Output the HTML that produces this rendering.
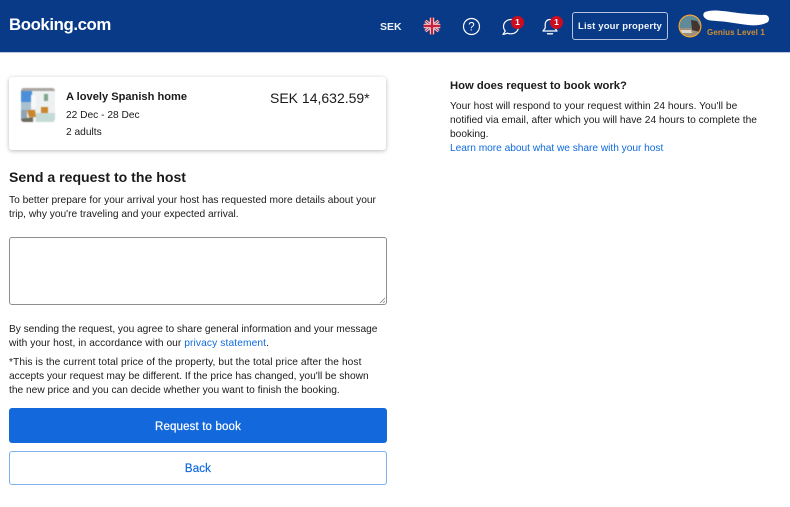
<!DOCTYPE html>
<html><head><meta charset="utf-8">
<style>
html,body{margin:0;padding:0;background:#fff}
body{width:790px;height:507px;position:relative;overflow:hidden;font-family:"Liberation Sans",sans-serif;color:#1a1a1a;-webkit-font-smoothing:antialiased}
.t{position:absolute;white-space:nowrap;font-size:10.2px;line-height:14px;letter-spacing:0}
.b{font-weight:700}
a{color:#0f6adf;text-decoration:none}
</style></head><body>
<div style="position:absolute;left:0;top:0;width:790px;height:53px;background:#083a87;border-bottom:1px solid #b9c6dc;box-sizing:border-box"></div>
<div class="t b" style="left:9px;top:13px;font-size:16.8px;line-height:24px;color:#fff;letter-spacing:-.4px">Booking.com</div>
<div class="t b" style="left:380px;top:20px;font-size:10.500px;color:#f0f4fa">SEK</div>

<svg style="position:absolute;left:423px;top:17px" width="18" height="18" viewBox="0 0 18 18">
<defs><clipPath id="c"><circle cx="9" cy="9" r="8.500"/></clipPath></defs>
<g clip-path="url(#c)"><rect width="18" height="18" fill="#1f2f6e"/>
<path d="M0 2L18 16M18 2L0 16" stroke="#f0dfe4" stroke-width="3"/>
<path d="M0 2L18 16M18 2L0 16" stroke="#c8233c" stroke-width="1"/>
<path d="M9 0V18M0 9H18" stroke="#f3e6ea" stroke-width="4.400"/>
<path d="M9 0V18M0 9H18" stroke="#c8233c" stroke-width="2.400"/></g></svg>

<svg style="position:absolute;left:462px;top:17px" width="19" height="19" viewBox="0 0 19 19"><circle cx="9.500" cy="9.500" r="8" fill="none" stroke="#fff" stroke-width="1.200"/><text x="9.500" y="13.500" text-anchor="middle" font-size="11.500" fill="#fff" font-family="Liberation Sans">?</text></svg>

<svg style="position:absolute;left:501px;top:17px" width="20" height="20" viewBox="0 0 20 20"><path d="M10 2.500C5.500 2.500 2.500 5.700 2.500 9.500c0 1.800.7 3.300 1.800 4.500L2 17.500l4.600-1.300c1 .4 2.200.6 3.400.6 4.500 0 7.500-3.200 7.500-7.200S14.500 2.500 10 2.500z" fill="none" stroke="#fff" stroke-width="1.200" stroke-linejoin="round"/></svg>
<div class="t b" style="left:511px;top:16px;width:13px;height:13px;border-radius:50%;background:#cc0d20;color:#fff;font-size:8.500px;line-height:13px;text-align:center">1</div>

<svg style="position:absolute;left:541px;top:17px" width="18" height="20" viewBox="0 0 18 20"><path d="M9 2.500c-3 0-4.800 2.200-4.800 5v3.500L2 14h14l-2.200-3V7.500c0-2.800-1.800-5-4.800-5z" fill="none" stroke="#fff" stroke-width="1.200" stroke-linejoin="round"/><path d="M6.500 16.800h5" stroke="#fff" stroke-width="1.300" stroke-linecap="round"/></svg>
<div class="t b" style="left:550px;top:16px;width:13px;height:13px;border-radius:50%;background:#cc0d20;color:#fff;font-size:8.500px;line-height:13px;text-align:center">1</div>

<div class="t b" style="left:572px;top:12px;width:96px;height:28px;box-sizing:border-box;border:1px solid #b5c4de;border-radius:3px;color:#f0f4fa;font-size:9.500px;line-height:27px;text-align:center;letter-spacing:.15px">List your property</div>

<svg style="position:absolute;left:678px;top:14px;" width="24" height="24" viewBox="0 0 24 24"><defs><clipPath id="a"><circle cx="12" cy="12" r="10.500"/></clipPath></defs><g clip-path="url(#a)"><rect width="24" height="24" fill="#5f8a99"/><rect y="14" width="24" height="10" fill="#9c8f7c"/><path d="M13 6l6 1 4 7-1 4-8-2z" fill="#43342f"/><path d="M2 16h11l1 3H4z" fill="#d8d6cc"/></g><circle cx="12" cy="12" r="10.900" fill="none" stroke="#f2a530" stroke-width="1.200"/></svg>
<svg style="position:absolute;left:702px;top:9px" width="68" height="20" viewBox="0 0 68 20"><path d="M3 3C10 0 22 2 36 4c10 1 20 2 28 2 4 1 4 7 0 8-4 2-10 3-18 2-8-1-14-2-21-3C18 12 10 12 6 11 1 9 0 5 3 3z" fill="#fff"/></svg>
<div class="t b" style="left:707px;top:26px;font-size:8px;color:#cf9030;letter-spacing:.1px">Genius Level 1</div>

<div style="position:absolute;left:9px;top:77px;width:377px;height:73px;background:#fff;border-radius:3px;box-shadow:0 1px 4px rgba(0,0,0,.28)"></div>
<svg style="position:absolute;left:21px;top:88px;border-radius:3px;filter:blur(.4px)" width="34" height="34" viewBox="0 0 34 34"><rect width="34" height="34" fill="#eef1f1"/><rect width="34" height="3" fill="#a9a5a0"/><rect y="3" width="11" height="11" fill="#4a8fd8"/><rect x="10" y="7" width="5" height="13" fill="#f7f8f8"/><rect x="23" y="6" width="4" height="7" fill="#7fa58c"/><rect y="14" width="10" height="8" fill="#a9c0d0"/><rect y="22" width="6" height="12" fill="#8fa3b2"/><path d="M6 22h8l1 7H8z" fill="#c9862e"/><path d="M20 19h7v6h-7z" fill="#c9862e"/><rect x="15" y="25" width="19" height="9" fill="#c5dbd8"/><path d="M0 31l12-2v5H0z" fill="#6f6a5c"/></svg>
<div class="t b" style="left:66px;top:90px;font-size:11.100px">A lovely Spanish home</div>
<div class="t" style="left:66px;top:109px">22 Dec - 28 Dec</div>
<div class="t" style="left:66px;top:126px">2 adults</div>
<div class="t" style="left:270px;top:89px;font-size:14px;line-height:18px">SEK 14,632.59*</div>

<div class="t b" style="left:9px;top:168px;font-size:14.100px;line-height:19px">Send a request to the host</div>
<div class="t" style="left:9px;top:194px">To better prepare for your arrival your host has requested more details about your</div>
<div class="t" style="left:9px;top:208px">trip, why you're traveling and your expected arrival.</div>

<div style="position:absolute;left:9px;top:237px;width:378px;height:68px;box-sizing:border-box;border:1px solid #8e8e8e;border-radius:3px"></div>
<svg style="position:absolute;left:379px;top:297px" width="7" height="7" viewBox="0 0 7 7"><path d="M1 6L6 1M4 6L6 4" stroke="#888" stroke-width=".8"/></svg>

<div class="t" style="left:9px;top:323px;letter-spacing:-.04px">By sending the request, you agree to share general information and your message</div>
<div class="t" style="left:9px;top:337px;letter-spacing:.05px">with your host, in accordance with our <a style="letter-spacing:.12px">privacy statement</a>.</div>
<div class="t" style="left:9px;top:356px;letter-spacing:.08px">*This is the current total price of the property, but the total price after the host</div>
<div class="t" style="left:9px;top:370px">accepts your request may be different. If the price has changed, you'll be shown</div>
<div class="t" style="left:9px;top:384px">the new price and you can decide whether you want to finish the booking.</div>

<div class="t" style="left:9px;top:408px;width:378px;height:35px;background:#1368dc;border-radius:3px;color:#fff;font-size:11.500px;line-height:39px;letter-spacing:.15px;text-align:center;-webkit-text-stroke:.2px #fff">Request to book</div>
<div class="t" style="left:9px;top:451px;width:378px;height:34px;box-sizing:border-box;border:1px solid #7db0ee;border-radius:3px;color:#0f6adf;font-size:11.500px;line-height:34px;letter-spacing:.15px;text-align:center;-webkit-text-stroke:.2px #0f6adf">Back</div>

<div class="t b" style="left:450px;top:79px;font-size:11.250px">How does request to book work?</div>
<div class="t" style="left:450px;top:100px;letter-spacing:.04px">Your host will respond to your request within 24 hours. You'll be</div>
<div class="t" style="left:450px;top:114px">notified via email, after which you will have 24 hours to complete the</div>
<div class="t" style="left:450px;top:128px">booking.</div>
<div class="t" style="left:450px;top:142px;letter-spacing:-.03px"><a>Learn more about what we share with your host</a></div>
</body></html>
